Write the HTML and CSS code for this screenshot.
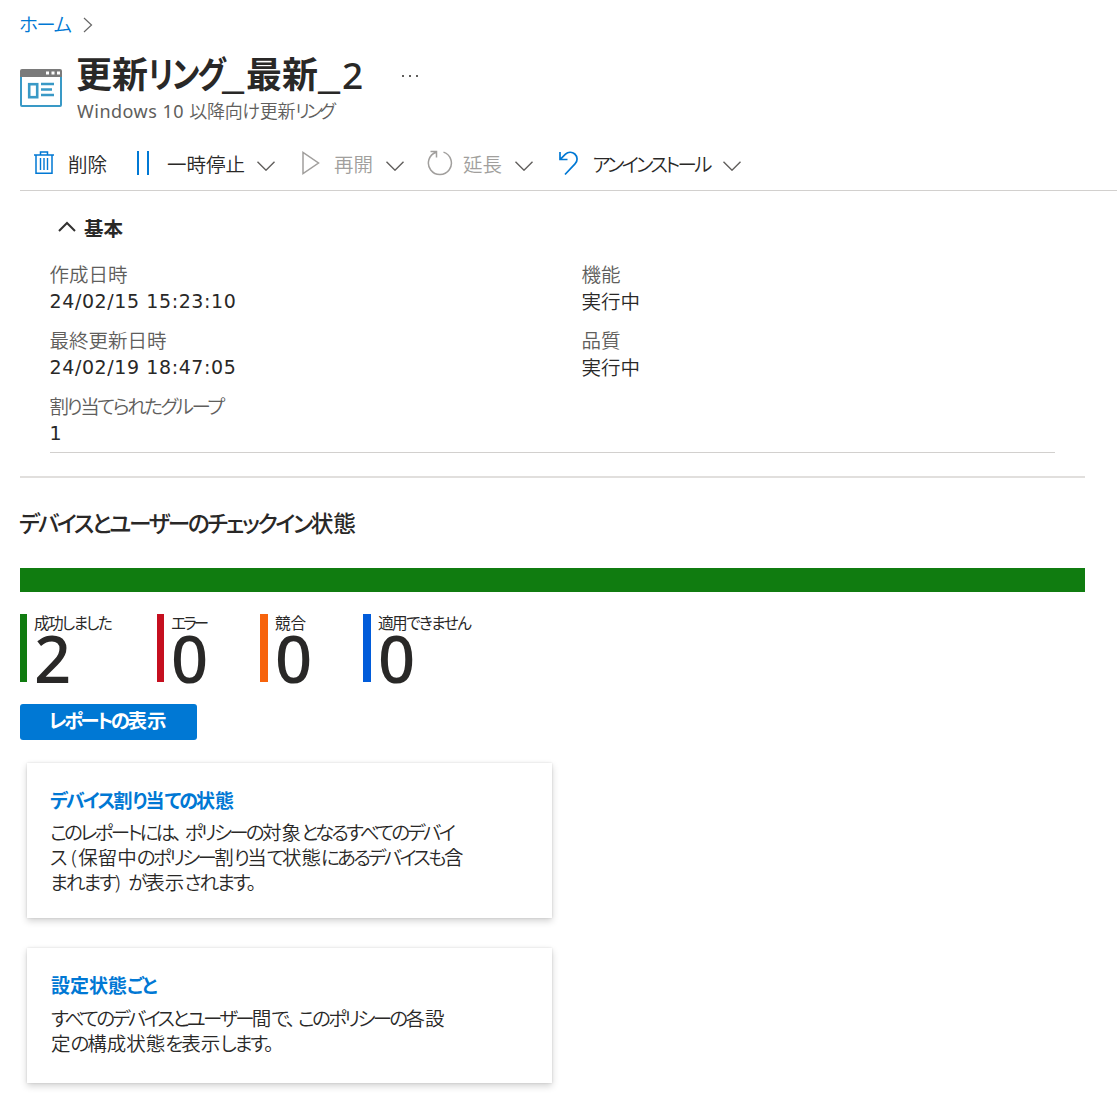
FILE: index.html
```html
<!DOCTYPE html>
<html lang="ja">
<head>
  <meta charset="UTF-8">
  <meta name="viewport" content="width=device-width, initial-scale=1.0">
  <title>更新リング_最新_2</title>
  <link rel="stylesheet" href="styles.css">
</head>
<body>
  <!-- パンくずリスト -->
  <nav class="breadcrumb">
    <a href="#" class="home">ホーム</a>
    <svg width="10" height="16" viewBox="0 0 10 16"><path d="M1 1l7.500 7L1 15" fill="none" stroke="#666" stroke-width="1.2"/></svg>
  </nav>

  <!-- ヘッダー -->
  <header class="header">
    <svg class="header-icon" width="42" height="38" viewBox="0 0 42 38">
      <rect x="1" y="5" width="40" height="32" rx="1" fill="#fff" stroke="#3999c6" stroke-width="2"/>
      <path d="M0 8V2a2 2 0 0 1 2-2h38a2 2 0 0 1 2 2v6z" fill="#7a7a7a"/>
      <path d="M26 2.500h3v3h-3zM31.500 2.500h3v3h-3zM37 2.500h3v3h-3z" fill="#fff"/>
      <rect x="9.200" y="15.200" width="8" height="13" fill="none" stroke="#3999c6" stroke-width="2.600"/>
      <path d="M21 15h13M21 20.500h11M21 26h13" stroke="#3999c6" stroke-width="2.600"/>
    </svg>
    <div>
      <h1 class="title"><span>更新</span><span class="title-kana">リング</span><span class="bar">_</span><span>最新</span><span class="bar">_</span><span class="title-num">2</span></h1>
      <p class="subtitle"><span class="subtitle-en">Windows 10 </span><span class="subtitle-ja">以降向け更新</span><span class="subtitle-kana">リング</span></p>
    </div>
    <span class="more"><i></i><i></i><i></i></span>
  </header>

  <!-- コマンドバー -->
  <div class="toolbar">
    <button class="cmd cmd-delete">
      <svg width="20" height="24" viewBox="0 0 20 24" fill="none" stroke="#0078d4" stroke-width="1.500"><path d="M0 4h20M6.500 4V1h7v3M2 4v18.200h16V4"/><path d="M6.500 7v12M10 7v12M13.500 7v12" stroke-width="1.400"/></svg>
      <span>削除</span>
    </button>
    <button class="cmd cmd-pause">
      <svg width="12" height="24" viewBox="0 0 12 24"><path d="M1 0v24M11 0v24" stroke="#0078d4" stroke-width="2"/></svg>
      <span>一時停止</span>
      <svg class="chevron" width="18" height="10" viewBox="0 0 18 10"><path d="M.5 .7L9 9.200 17.500 .7"/></svg>
    </button>
    <button class="cmd cmd-resume" disabled>
      <svg width="18" height="24" viewBox="0 0 18 24"><path d="M1 1.500v21L16.500 12z" fill="none" stroke="#a19f9d" stroke-width="1.500"/></svg>
      <span>再開</span>
      <svg class="chevron" width="18" height="10" viewBox="0 0 18 10"><path d="M.5 .7L9 9.200 17.500 .7"/></svg>
    </button>
    <button class="cmd cmd-extend" disabled>
      <svg width="26" height="26" viewBox="0 0 26 26" fill="none" stroke="#a19f9d" stroke-width="1.500"><path d="M16.500 2.100A11.500 11.500 0 1 1 9 2.200M3.500 1.500h6v6"/></svg>
      <span>延長</span>
      <svg class="chevron" width="18" height="10" viewBox="0 0 18 10"><path d="M.5 .7L9 9.200 17.500 .7"/></svg>
    </button>
    <button class="cmd cmd-uninstall">
      <svg width="20" height="25" viewBox="0 0 20 25" fill="none" stroke="#0078d4" stroke-width="1.700"><path d="M1 1v7.500h7.500M1.200 8.300L6.500 3.200C9 .8 13 .5 15.800 3c3 2.800 3 7 .2 9.800L6 23.500"/></svg>
      <span class="uninstall-text">アンインストール</span>
      <svg class="chevron" width="18" height="10" viewBox="0 0 18 10"><path d="M.5 .7L9 9.200 17.500 .7"/></svg>
    </button>
  </div>

  <!-- 基本 -->
  <section class="essentials">
    <h3 class="essentials-title">
      <svg width="18" height="11" viewBox="0 0 18 11"><path d="M1 10l8-8 8 8" fill="none" stroke="#323130" stroke-width="2"/></svg>
      <span>基本</span>
    </h3>
    <div class="props">
      <dl class="props-col">
        <dt>作成日時</dt>
        <dd class="date">24/02/15 15:23:10</dd>
        <dt>最終更新日時</dt>
        <dd class="date">24/02/19 18:47:05</dd>
        <dt class="groups">割り当てられたグループ</dt>
        <dd class="date">1</dd>
      </dl>
      <dl class="props-col">
        <dt>機能</dt>
        <dd>実行中</dd>
        <dt>品質</dt>
        <dd>実行中</dd>
      </dl>
    </div>
  </section>

  <!-- チェックイン状態 -->
  <section class="status">
    <h2 class="status-title">デバイスとユーザーのチェックイン<span class="kanji">状態</span></h2>
    <div class="status-bar"></div>
    <div class="counters">
      <div class="counter success"><span class="label">成功しました</span><span class="num">2</span></div>
      <div class="counter error"><span class="label">エラー</span><span class="num">0</span></div>
      <div class="counter conflict"><span class="label">競合</span><span class="num">0</span></div>
      <div class="counter na"><span class="label">適用できません</span><span class="num">0</span></div>
    </div>
    <button class="report-btn">レポートの<span class="kanji">表示</span></button>
  </section>

  <!-- レポートカード -->
  <div class="cards">
    <div class="card">
      <a href="#" class="card-title">デバイス<span class="kanji">割</span>り<span class="kanji">当</span>ての<span class="kanji">状態</span></a>
      <p class="card-text">このレポートには、<span class="after-comma">ポリシーの</span><span class="kanji">対象</span>となるすべてのデバイ<br>ス<span class="paren"> (</span><span class="kanji">保留中</span>のポリシー<span class="kanji">割</span>り<span class="kanji">当</span>て<span class="kanji">状態</span>にあるデバイスも<span class="kanji">含</span><br><span class="last-line">まれます<span class="paren">) </span>が<span class="kanji">表示</span>されます。</span></p>
    </div>
    <div class="card card-small">
      <a href="#" class="card-title"><span class="kanji">設定状態</span>ごと</a>
      <p class="card-text">すべてのデバイスとユーザー<span class="kanji">間</span>で、<span class="after-comma">このポリシーの</span><span class="kanji">各設</span><br><span class="last-line"><span class="kanji">定</span>の<span class="kanji">構成状態</span>を<span class="kanji">表示</span>します。</span></p>
    </div>
  </div>
</body>
</html>
```
FILE: styles.css
```css
* {
  box-sizing: border-box;
}

body {
  font-family: "Noto Sans", "Noto Sans CJK JP", sans-serif;
  font-size: 19.5px;
  font-weight: 350;
  font-feature-settings: "palt";
  color: #292827;
  background-color: #fff;
  margin: 0;
  padding-left: 20px;
  height: 1112px;
  overflow: hidden;
  white-space: nowrap;
}

h1, h2, h3, p, dl, dd {
  margin: 0;
}

a {
  color: #0078d4;
  text-decoration: none;
}

svg {
  display: block;
  flex: none;
}

.breadcrumb {
  display: flex;
  align-items: center;
  gap: 12px;
  height: 50px;
}

.home {
  width: 51px;
  margin: -3px 1px 0 -1px;
  letter-spacing: -1.4px;
}

.header {
  display: flex;
  align-items: flex-start;
  height: 90px;
}

.header-icon {
  margin: 19px 15px 0 0;
}

.title {
  display: flex;
  margin-left: -1px;
  font-size: 36px;
  font-weight: 600;
  line-height: 50px;
}

.title-kana {
  width: 74px;
  letter-spacing: -2px;
  transform: scaleX(0.83);
  transform-origin: left;
}

.bar {
  width: 24px;
  transform: scaleX(1.45);
  transform-origin: left;
}

.title-num {
  font-weight: 500;
  font-size: 37px;
}

.subtitle {
  font-size: 18px;
  line-height: 22px;
  color: #605e5c;
}

.subtitle-en {
  font-weight: 400;
  letter-spacing: 0.5px;
}

.subtitle-ja {
  letter-spacing: -0.3px;
}

.subtitle-kana {
  letter-spacing: -3.2px;
}

.more {
  display: flex;
  gap: 5px;
  margin: 25px 0 0 39px;
}

.more i {
  width: 2px;
  height: 2px;
  background-color: #605e5c;
}

.toolbar {
  display: flex;
  align-items: center;
  height: 51px;
  padding: 0 0 4px 14px;
  border-bottom: 1px solid #d2d0ce;
}

.cmd {
  display: flex;
  align-items: center;
  padding: 0;
  border: none;
  background: none;
  font: inherit;
  font-feature-settings: inherit;
  color: #292827;
  line-height: 28px;
}

.cmd:disabled {
  color: #a19f9d;
}

.cmd span {
  padding-top: 3px;
}

.chevron {
  margin: 6px 0 0 13px;
  fill: none;
  stroke: #605e5c;
  stroke-width: 1.4;
}

.cmd-delete {
  gap: 14px;
  width: 103px;
}

.cmd-pause span {
  margin-left: 18px;
  width: 77px;
}

.cmd-resume {
  margin-left: 27px;
}

.cmd-resume span {
  margin-left: 14px;
}

.cmd-extend {
  margin-left: 23px;
}

.cmd-extend span {
  margin-left: 10px;
}

.cmd-uninstall {
  margin-left: 26px;
}

.uninstall-text {
  margin-left: 13px;
  width: 118px;
  letter-spacing: -2.7px;
}

.essentials {
  width: 1065px;
  height: 287px;
  padding: 23px 30px 0;
  border-bottom: 2px solid #e1dfdd;
}

.essentials-title {
  display: flex;
  align-items: center;
  gap: 8px;
  padding-left: 8px;
  font-size: 19.5px;
  font-weight: 600;
  line-height: 30px;
}

.essentials-title svg {
  margin-top: -5px;
}

.props {
  display: grid;
  grid-template-columns: 532px 1fr;
  height: 209px;
  padding-top: 17px;
  border-bottom: 1px solid #d2d0ce;
}

.props-col {
  margin-left: -0.5px;
}

dt {
  line-height: 27px;
  color: #605e5c;
}

dd {
  line-height: 27px;
  margin-bottom: 12px;
}

.date {
  font-family: "DejaVu Sans", sans-serif;
  font-size: 19px;
  font-weight: 400;
  letter-spacing: 0.6px;
}

.groups {
  letter-spacing: -2.45px;
}

.status {
  width: 1065px;
}

.status-title {
  margin-left: -1px;
  font-size: 22.7px;
  font-weight: 500;
  line-height: 40px;
  letter-spacing: -2.4px;
  padding: 26px 0 24px;
}

.kanji {
  letter-spacing: 0;
}

.status-bar {
  height: 24px;
  background-color: #107c10;
}

.counters {
  display: grid;
  grid-template-columns: 137px 103px 103px 150px;
  margin-top: 22px;
}

.counter {
  height: 68px;
  padding-left: 7px;
  border-left: 8px solid #107c10;
}

.success {
  border-left-width: 7px;
}

.success .label {
  letter-spacing: -1.6px;
}

.error {
  border-left-width: 7px;
  border-color: #c50f1f;
}

.error .label {
  letter-spacing: -2.9px;
}

.conflict {
  border-color: #f7630c;
}

.conflict .label {
  letter-spacing: 0;
}

.na {
  border-color: #015cda;
}

.label {
  display: block;
  font-size: 15.6px;
  font-weight: 400;
  line-height: 18px;
  letter-spacing: -1.5px;
}

.num {
  display: block;
  font-size: 65px;
  font-weight: 500;
  line-height: 53px;
}

.report-btn {
  display: block;
  width: 177px;
  height: 36px;
  margin-top: 22px;
  padding: 0 2px 5px 0;
  border: none;
  border-radius: 3px;
  background-color: #0078d4;
  color: #fff;
  font: inherit;
  font-feature-settings: inherit;
  font-weight: 600;
  letter-spacing: -2.5px;
}

.cards {
  display: flex;
  flex-direction: column;
  gap: 30px;
  padding: 23px 0 0 7px;
}

.card {
  width: 525px;
  height: 155px;
  padding: 25px 24px 0 23px;
  background-color: #fff;
  box-shadow: 0 3px 7px rgba(0, 0, 0, 0.18), 0 0 2px rgba(0, 0, 0, 0.12);
}

.card-small {
  height: 135px;
  padding-left: 24px;
}

.card-title {
  display: block;
  font-size: 19px;
  font-weight: 600;
  line-height: 26px;
  letter-spacing: -1.9px;
}

.card-text {
  padding-top: 6px;
  line-height: 25px;
  letter-spacing: -2.7px;
}

.card-small .card-text {
  padding-top: 7px;
}

.last-line {
  letter-spacing: -2.1px;
}

.after-comma {
  margin-left: 5px;
}

.paren {
  letter-spacing: 1.5px;
}
```
